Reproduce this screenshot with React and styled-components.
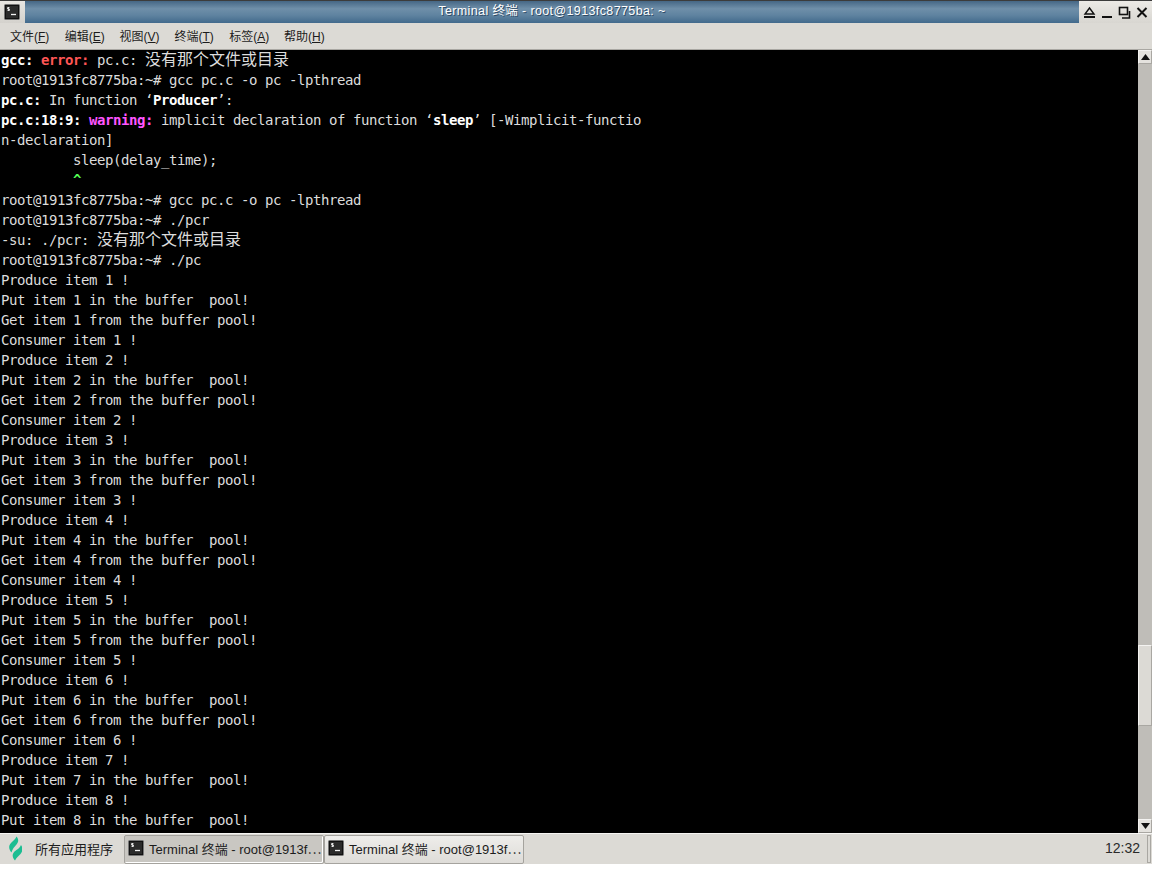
import React from 'react'
import styled, { createGlobalStyle } from 'styled-components'

const GlobalStyle = createGlobalStyle`
  html, body { margin: 0; padding: 0; background: #fff; }
`

const Desktop = styled.div`
  width: 1152px;
  height: 896px;
  overflow: hidden;
  background: #fff;
  display: flex;
  flex-direction: column;
  font-family: "Liberation Sans", "Noto Sans CJK SC", sans-serif;
`
const Window = styled.div`
  height: 833px;
  flex: none;
  display: flex;
  flex-direction: column;
  background: #dcdad5;
`
const TitleBar = styled.div`
  height: 23px;
  flex: none;
  display: flex;
  align-items: stretch;
  background: #e4e2de;
  border-top: 1px solid #3c3c3c;
  box-sizing: border-box;
`
const TitleIconBox = styled.div`
  width: 25px;
  flex: none;
  display: flex;
  align-items: center;
  justify-content: center;
  padding-right: 1px;
  box-sizing: border-box;
  background: linear-gradient(#e8e6e2, #d4d2cd);
`
const TitleText = styled.div`
  flex: 1;
  background: linear-gradient(#456785, #6f8fa9 35%, #5f83a0 65%, #426a8c);
  color: #fff;
  font-size: 12.5px;
  line-height: 21px;
  text-align: center;
  letter-spacing: 0.38px;
  text-shadow: 1px 1px 0 #2f4b66;
`
const WindowButtons = styled.div`
  width: 73px;
  flex: none;
  display: flex;
  align-items: center;
  justify-content: flex-end;
  gap: 5px;
  padding-right: 4px;
  box-sizing: border-box;
  background: linear-gradient(#eceae6, #d8d6d1);
`
const MenuBar = styled.div`
  height: 27px;
  flex: none;
  display: flex;
  align-items: center;
  padding: 0 0 2px 10px;
  box-sizing: border-box;
  background: #dcdad5;
  border-bottom: 1px solid #a9a7a2;
  font-size: 12px;
  color: #1c1c1c;
`
const MenuItem = styled.span`
  width: 54.8px;
  flex: none;
  u { text-decoration: underline; }
`
const TerminalArea = styled.div`
  flex: 1;
  min-height: 0;
  display: flex;
`
const Screen = styled.pre`
  flex: 1;
  margin: 0;
  padding: 0 0 0 1px;
  overflow: hidden;
  background: #000;
  color: #dcdcdc;
  font-family: "DejaVu Sans Mono", "Noto Sans CJK SC", monospace;
  font-size: 14px;
  letter-spacing: -0.43px;
  line-height: 20px;
`
const Line = styled.div`
  height: 20px;
  white-space: pre;
`
const Bold = styled.b`
  font-weight: 700;
  color: ${p => p.$color || '#fff'};
`
const Cjk = styled.span`
  font-size: 16px;
  letter-spacing: 0;
`
const ScrollBar = styled.div`
  width: 14px;
  flex: none;
  display: flex;
  flex-direction: column;
  background: #bfbdb8;
  box-sizing: border-box;
`
const ScrollArrow = styled.div`
  height: 14px;
  flex: none;
  display: flex;
  align-items: center;
  justify-content: center;
  background: #e4e2de;
  border: 1px solid #f4f3f1;
  border-right-color: #a9a7a2;
  border-bottom-color: #a9a7a2;
  box-sizing: border-box;
`
const ScrollGap = styled.div`
  flex: ${p => p.$size};
`
const Thumb = styled.div`
  height: 81px;
  flex: none;
  background: #dcdad5;
  border: 1px solid #f4f3f1;
  border-right-color: #a9a7a2;
  border-bottom-color: #a9a7a2;
  box-sizing: border-box;
`
const Taskbar = styled.div`
  height: 31px;
  flex: none;
  display: flex;
  align-items: center;
  background: #dcdad5;
  border-top: 1px solid #f6f5f3;
  box-sizing: border-box;
  font-size: 13px;
  color: #1c1c1c;
`
const AppMenu = styled.div`
  width: 124px;
  flex: none;
  display: flex;
  align-items: center;
  gap: 13px;
  padding: 0 0 2px 9px;
  box-sizing: border-box;
`
const TaskButton = styled.div`
  width: 200px;
  height: 29px;
  flex: none;
  display: flex;
  align-items: center;
  gap: 5px;
  padding: 0 0 2px 3px;
  box-sizing: border-box;
  border: 1px solid #a5a39e;
  border-radius: 2px;
  background: ${p => (p.$active ? '#c9c7c2' : 'linear-gradient(#eeedea, #dedcd8)')};
  box-shadow: ${p => (p.$active ? 'inset -1px -1px 0 #fff' : 'none')};
`
const TaskLabel = styled.span`
  white-space: nowrap;
`
const Clock = styled.div`
  margin-left: auto;
  margin-right: 7px;
  padding-bottom: 2px;
  font-size: 14px;
  color: #2a2a2a;
`
const Handle = styled.div`
  width: 4px;
  height: 28px;
  flex: none;
  margin-right: 1px;
  box-sizing: border-box;
  border: 1px solid #a9a7a2;
`

const TermIcon = () => (
  <svg width="16" height="16" viewBox="0 0 16 16">
    <rect x="0.5" y="0.5" width="15" height="15" rx="1" fill="#2b2b2b" stroke="#777" />
    <rect x="1.5" y="1.500" width="13" height="13" fill="#2b2b2b" stroke="#111" />
    <path d="M5.500 3.500H3.500V5H5.500V6.500H3.500M4.500 3V7" stroke="#f2f2f2" strokeWidth="0.8" fill="none" />
    <path d="M7 10.500h5" stroke="#f2f2f2" strokeWidth="1.300" />
  </svg>
)

const Shade = () => (
  <svg width="13" height="13" viewBox="0 0 13 13">
    <path d="M6.500 2 L11 8 H2 Z" fill="none" stroke="#111" strokeWidth="1.400" />
    <path d="M1 11h11" stroke="#111" strokeWidth="2" />
  </svg>
)
const Minimize = () => (
  <svg width="12" height="13" viewBox="0 0 12 13">
    <path d="M1 11h10" stroke="#111" strokeWidth="2" />
  </svg>
)
const Maximize = () => (
  <svg width="13" height="13" viewBox="0 0 13 13">
    <rect x="1.500" y="1.500" width="8" height="7" fill="none" stroke="#111" strokeWidth="1.600" />
    <path d="M11.500 5v7H4" fill="none" stroke="#111" strokeWidth="1.600" />
  </svg>
)
const CloseX = () => (
  <svg width="12" height="13" viewBox="0 0 12 13">
    <path d="M1.500 2 L10.500 11 M10.500 2 L1.500 11" stroke="#111" strokeWidth="2" />
  </svg>
)
const Leaf = () => (
  <svg width="13" height="25" viewBox="0 0 13 25">
    <path d="M7.500 0.500 C10 3.500 9.500 6 7.500 8.500 L4.500 12 C3.500 13.500 3 15 2.500 16.500 C-0.500 13 -0.500 9.500 2 7 C4.500 4.500 6.500 3 7.500 0.500Z" fill="#1bbd92" />
    <path d="M12 9 C14.500 12.500 13.500 15.500 11.500 18 C9.500 20 7.500 21.500 6 24.500 C3 21.500 3 18 5.500 15.500 C8 13.500 11 12 12 9Z" fill="#1bbd92" />
  </svg>
)
const Arrow = ({ up }) => (
  <svg width="9" height="6" viewBox="0 0 9 6">
    <path d={up ? 'M4.500 0 L9 6 H0 Z' : 'M0 0 H9 L4.500 6 Z'} fill="#111" />
  </svg>
)

const prompt = 'root@1913fc8775ba:~# '
const noSuchFile = '没有那个文件或目录'

const cycle = n => [
  `Produce item ${n} !`,
  `Put item ${n} in the buffer  pool!`,
  `Get item ${n} from the buffer pool!`,
  `Consumer item ${n} !`,
]

const outputLines = [
  ...[1, 2, 3, 4, 5, 6].flatMap(cycle),
  'Produce item 7 !',
  'Put item 7 in the buffer  pool!',
  'Produce item 8 !',
  'Put item 8 in the buffer  pool!',
]

const menus = [
  ['文件(', 'F', ')'],
  ['编辑(', 'E', ')'],
  ['视图(', 'V', ')'],
  ['终端(', 'T', ')'],
  ['标签(', 'A', ')'],
  ['帮助(', 'H', ')'],
]

const App = () => (
  <Desktop>
    <GlobalStyle />
    <Window>
      <TitleBar>
        <TitleIconBox><TermIcon /></TitleIconBox>
        <TitleText>Terminal 终端 - root@1913fc8775ba: ~</TitleText>
        <WindowButtons>
          <Shade />
          <Minimize />
          <Maximize />
          <CloseX />
        </WindowButtons>
      </TitleBar>
      <MenuBar>
        {menus.map(([a, k, b]) => (
          <MenuItem key={k}>{a}<u>{k}</u>{b}</MenuItem>
        ))}
      </MenuBar>
      <TerminalArea>
        <Screen>
          <Line><Bold>gcc: </Bold><Bold $color="#ff5555">error: </Bold>pc.c: <Cjk>{noSuchFile}</Cjk></Line>
          <Line>{prompt}gcc pc.c -o pc -lpthread</Line>
          <Line><Bold>pc.c:</Bold> In function ‘<Bold>Producer</Bold>’:</Line>
          <Line><Bold>pc.c:18:9: </Bold><Bold $color="#ff55ff">warning: </Bold>implicit declaration of function ‘<Bold>sleep</Bold>’ [-Wimplicit-functio</Line>
          <Line>n-declaration]</Line>
          <Line>{'         sleep(delay_time);'}</Line>
          <Line>{'         '}<Bold $color="#55ff55">^</Bold></Line>
          <Line>{prompt}gcc pc.c -o pc -lpthread</Line>
          <Line>{prompt}./pcr</Line>
          <Line>-su: ./pcr: <Cjk>{noSuchFile}</Cjk></Line>
          <Line>{prompt}./pc</Line>
          {outputLines.map((l, i) => <Line key={i}>{l}</Line>)}
        </Screen>
        <ScrollBar>
          <ScrollArrow><Arrow up /></ScrollArrow>
          <ScrollGap $size={581} />
          <Thumb />
          <ScrollGap $size={93} />
          <ScrollArrow><Arrow /></ScrollArrow>
        </ScrollBar>
      </TerminalArea>
    </Window>
    <Taskbar>
      <AppMenu><Leaf />所有应用程序</AppMenu>
      <TaskButton $active><TermIcon /><TaskLabel>Terminal 终端 - root@1913f⋯</TaskLabel></TaskButton>
      <TaskButton><TermIcon /><TaskLabel>Terminal 终端 - root@1913f⋯</TaskLabel></TaskButton>
      <Clock>12:32</Clock>
      <Handle />
    </Taskbar>
  </Desktop>
)

export default App
